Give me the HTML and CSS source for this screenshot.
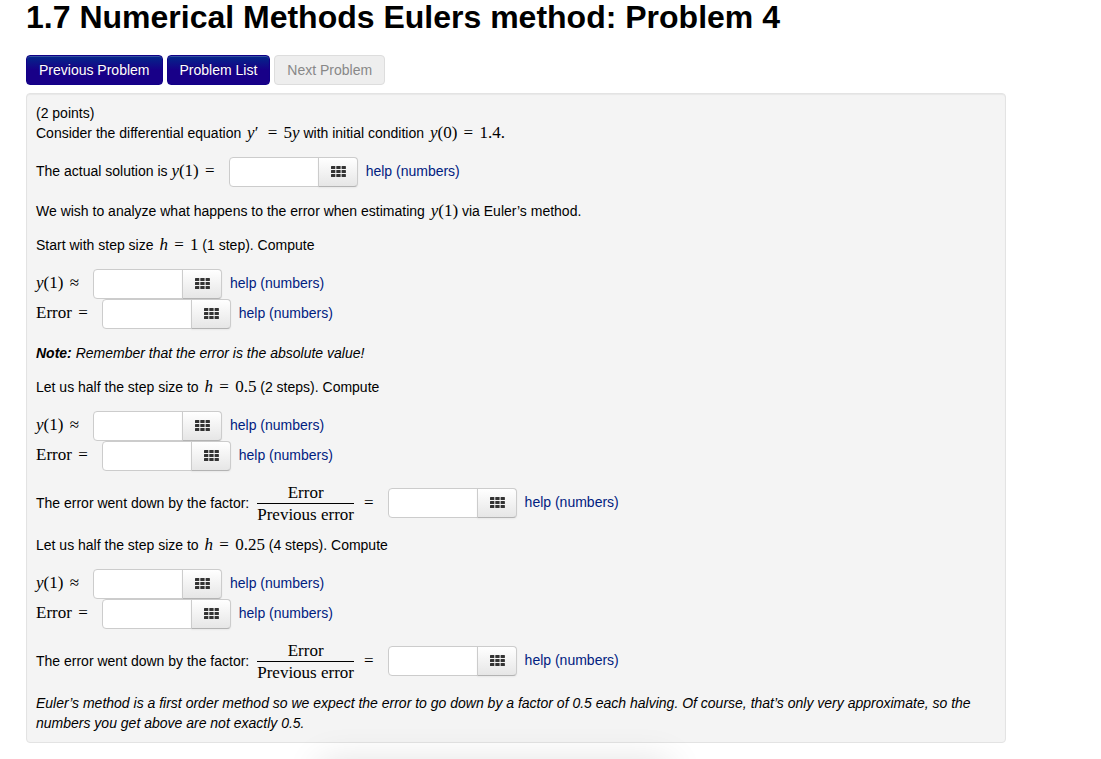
FILE: index.html
```html
<!DOCTYPE html>
<html lang="en">
<head>
  <meta charset="UTF-8">
  <meta name="viewport" content="width=device-width, initial-scale=1.0">
  <title>1.7 Numerical Methods Eulers method: Problem 4</title>
  <link rel="stylesheet" href="styles.css">
</head>
<body>
  <!-- keypad icon shared by every answer box -->
  <svg class="sprite" aria-hidden="true">
    <symbol id="keypad" viewBox="0 0 15 11">
      <g fill="#333">
        <rect x="0" y="0" width="4.3" height="3" rx="0.5"/><rect x="5.3" y="0" width="4.3" height="3" rx="0.5"/><rect x="10.6" y="0" width="4.3" height="3" rx="0.5"/>
        <rect x="0" y="4" width="4.3" height="3" rx="0.5"/><rect x="5.3" y="4" width="4.3" height="3" rx="0.5"/><rect x="10.6" y="4" width="4.3" height="3" rx="0.5"/>
        <rect x="0" y="8" width="4.3" height="3" rx="0.5"/><rect x="5.3" y="8" width="4.3" height="3" rx="0.5"/><rect x="10.6" y="8" width="4.3" height="3" rx="0.5"/>
      </g>
    </symbol>
  </svg>

  <main class="page">
    <h1>1.7 Numerical Methods Eulers method: Problem 4</h1>
    <nav class="problem-nav">
      <button class="btn btn-primary" type="button">Previous Problem</button>
      <button class="btn btn-primary" type="button">Problem List</button>
      <button class="btn" type="button" disabled>Next Problem</button>
    </nav>

    <form class="problem">
      <p>(2 points)<br>
        Consider the differential equation <span class="math"><i>y</i><span class="prime">′</span> <b class="rel">=</b> 5<i>y</i></span> with initial condition <span class="math"><i>y</i>(0) <b class="rel">=</b> 1.4.</span></p>

      <div class="answer">
        <label for="ans1">The actual solution is <span class="math"><i>y</i>(1) <b class="rel">=</b></span></label>
        <span class="answer-box"><input type="text" id="ans1"><button type="button" aria-label="Equation editor"><svg><use href="#keypad"/></svg></button></span>
        <a href="#">help (numbers)</a>
      </div>

      <p>We wish to analyze what happens to the error when estimating <span class="math"><i>y</i>(1)</span> via Euler’s method.</p>
      <p>Start with step size <span class="math"><i>h</i> <b class="rel">=</b> 1</span> (1 step). Compute</p>

      <div class="answers">
        <div class="answer">
          <label for="ans2"><span class="math"><i>y</i>(1) <b class="rel">≈</b></span></label>
          <span class="answer-box"><input type="text" id="ans2"><button type="button" aria-label="Equation editor"><svg><use href="#keypad"/></svg></button></span>
          <a href="#">help (numbers)</a>
        </div>
        <div class="answer">
          <label for="ans3"><span class="math">Error <b class="rel">=</b></span></label>
          <span class="answer-box"><input type="text" id="ans3"><button type="button" aria-label="Equation editor"><svg><use href="#keypad"/></svg></button></span>
          <a href="#">help (numbers)</a>
        </div>
      </div>

      <p><em><strong>Note:</strong> Remember that the error is the absolute value!</em></p>
      <p>Let us half the step size to <span class="math"><i>h</i> <b class="rel">=</b> 0.5</span> (2 steps). Compute</p>

      <div class="answers">
        <div class="answer">
          <label for="ans4"><span class="math"><i>y</i>(1) <b class="rel">≈</b></span></label>
          <span class="answer-box"><input type="text" id="ans4"><button type="button" aria-label="Equation editor"><svg><use href="#keypad"/></svg></button></span>
          <a href="#">help (numbers)</a>
        </div>
        <div class="answer">
          <label for="ans5"><span class="math">Error <b class="rel">=</b></span></label>
          <span class="answer-box"><input type="text" id="ans5"><button type="button" aria-label="Equation editor"><svg><use href="#keypad"/></svg></button></span>
          <a href="#">help (numbers)</a>
        </div>
      </div>

      <div class="answer ratio">
        <label for="ans6">The error went down by the factor:
          <span class="math fraction"><span>Error</span><span>Previous error</span></span>
          <span class="math"><b class="rel">=</b></span></label>
        <span class="answer-box"><input type="text" id="ans6"><button type="button" aria-label="Equation editor"><svg><use href="#keypad"/></svg></button></span>
        <a href="#">help (numbers)</a>
      </div>

      <p>Let us half the step size to <span class="math"><i>h</i> <b class="rel">=</b> 0.25</span> (4 steps). Compute</p>

      <div class="answers">
        <div class="answer">
          <label for="ans7"><span class="math"><i>y</i>(1) <b class="rel">≈</b></span></label>
          <span class="answer-box"><input type="text" id="ans7"><button type="button" aria-label="Equation editor"><svg><use href="#keypad"/></svg></button></span>
          <a href="#">help (numbers)</a>
        </div>
        <div class="answer">
          <label for="ans8"><span class="math">Error <b class="rel">=</b></span></label>
          <span class="answer-box"><input type="text" id="ans8"><button type="button" aria-label="Equation editor"><svg><use href="#keypad"/></svg></button></span>
          <a href="#">help (numbers)</a>
        </div>
      </div>

      <div class="answer ratio">
        <label for="ans9">The error went down by the factor:
          <span class="math fraction"><span>Error</span><span>Previous error</span></span>
          <span class="math"><b class="rel">=</b></span></label>
        <span class="answer-box"><input type="text" id="ans9"><button type="button" aria-label="Equation editor"><svg><use href="#keypad"/></svg></button></span>
        <a href="#">help (numbers)</a>
      </div>

      <p><em>Euler’s method is a first order method so we expect the error to go down by a factor of 0.5 each halving. Of course, that’s only very approximate, so the numbers you get above are not exactly 0.5.</em></p>
    </form>
  </main>
  <div class="dock-shadow"></div>
</body>
</html>
```
FILE: styles.css
```css
* {
  box-sizing: border-box;
}
body {
  margin: 0;
  background-color: #fff;
  color: #000;
  font-family: "Helvetica Neue", "Liberation Sans", Arial, sans-serif;
  font-size: 14px;
  line-height: 20px;
}
.sprite {
  display: none;
}
.page {
  margin: 0 95px 16px 26px;
}
h1 {
  margin: 0 0 20px;
  font-size: 32px;
  line-height: 34px;
}
.problem-nav {
  display: flex;
  gap: 4px;
  padding-top: 1px;
  margin-bottom: 8px;
}
.btn {
  height: 30px;
  padding: 0 12px;
  border: 1px solid #ddd;
  border-radius: 4px;
  background-color: #eee;
  color: #888;
  font: inherit;
}
.btn-primary {
  border-color: #108;
  background-image: linear-gradient(#03288a, #180088 50%);
  box-shadow: inset 0 1px 0 rgba(255, 255, 255, 0.2);
  color: #fff;
  text-shadow: 0 -1px 0 rgba(0, 0, 0, 0.25);
}
.problem {
  display: flex;
  flex-direction: column;
  gap: 14px;
  padding: 9px;
  border: 1px solid #e3e3e3;
  border-radius: 4px;
  background-color: #f4f4f4;
  box-shadow: inset 0 1px 1px rgba(0, 0, 0, 0.05);
}
.problem p {
  margin: 0;
}
.math {
  font-family: "Liberation Serif", "Times New Roman", serif;
  font-size: 17px;
  line-height: 18px;
  white-space: nowrap;
}
p .math {
  margin-left: 2px;
}
.prime {
  margin-right: 3px;
}
.rel {
  margin: 0 2px;
  font-weight: normal;
}
.answer {
  display: flex;
  align-items: center;
}
.answer label {
  margin-right: 12px;
  padding-bottom: 2px;
}
.answer a {
  margin-left: 8px;
  padding-bottom: 2px;
  color: #002080;
  text-decoration: none;
}
.answer-box {
  display: flex;
  height: 30px;
}
.answer-box input {
  width: 90px;
  padding: 4px 6px;
  border: 1px solid #ccc;
  border-radius: 4px 0 0 4px;
  background-color: #fff;
  font: inherit;
}
.answer-box button {
  display: flex;
  align-items: center;
  justify-content: center;
  width: 40px;
  margin-left: -1px;
  padding: 0 0 1px 1px;
  border: 1px solid #ccc;
  border-bottom-color: #b3b3b3;
  border-radius: 0 4px 4px 0;
  background-image: linear-gradient(#fff, #e6e6e6);
  box-shadow: 0 1px 2px rgba(0, 0, 0, 0.05);
}
.answer-box svg {
  width: 15px;
  height: 11px;
}
.answer.ratio label {
  display: flex;
  align-items: center;
  gap: 8px;
  padding-bottom: 0;
}
.fraction {
  display: flex;
  flex-direction: column;
  margin: -3px 0 -4px;
  text-align: center;
  line-height: 21px;
}
.fraction span:last-child {
  border-top: 1px solid #000;
}
/* soft shade along the bottom edge of the window */
.dock-shadow {
  position: fixed;
  top: 100%;
  left: 320px;
  width: 350px;
  height: 40px;
  box-shadow: 0 2px 36px rgba(0, 0, 0, 0.12);
  pointer-events: none;
}
```
